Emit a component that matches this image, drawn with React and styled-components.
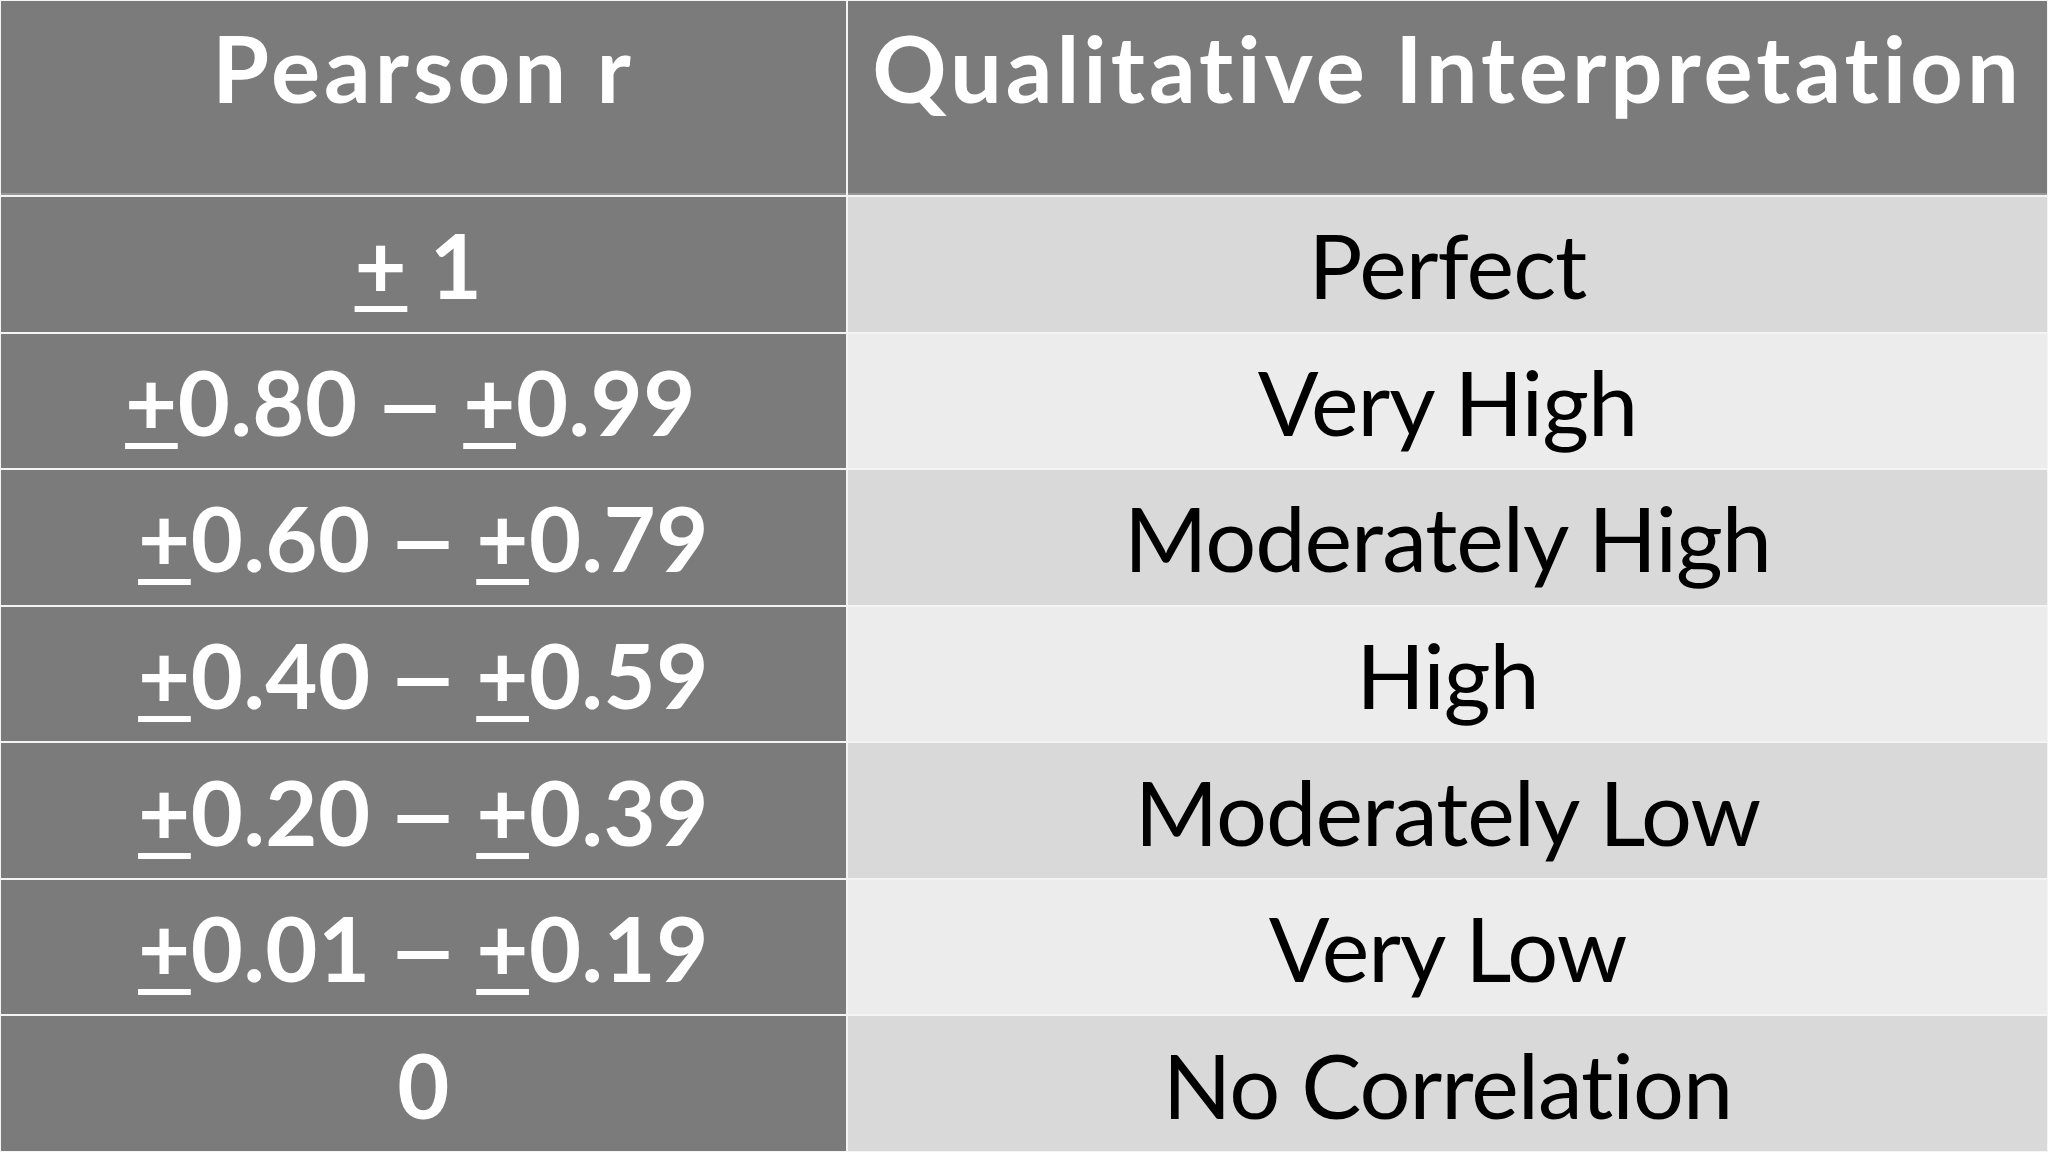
import React from 'react';
import styled, { createGlobalStyle } from 'styled-components';

const GlobalStyle = createGlobalStyle`
  html, body {
    margin: 0;
    padding: 0;
    background: #f4f4f4;
    overflow: hidden;
  }
`;

const Table = styled.div`
  display: grid;
  grid-template-columns: 845px 1fr;
  grid-template-rows: 194px repeat(7, 1fr);
  column-gap: 2px;
  row-gap: 2px;
  box-sizing: border-box;
  width: 2048px;
  height: 1152px;
  padding: 1px;
  background: #f4f4f4;
  font-family: Lato, "Open Sans", sans-serif;
  font-size: 90px;
  line-height: 1.2;
  font-variant-ligatures: none;
`;

const HeadCell = styled.div`
  display: flex;
  justify-content: center;
  align-items: flex-start;
  padding-top: 12px;
  background: #7b7b7b;
  border-bottom: 2px solid #979797;
  color: #ffffff;
  font-size: 92px;
  font-weight: 700;
  letter-spacing: 4px;
  white-space: nowrap;
`;

const RangeCell = styled.div`
  display: flex;
  justify-content: center;
  align-items: center;
  box-sizing: border-box;
  background: #7b7b7b;
  color: #ffffff;
  font-weight: 700;
  letter-spacing: 0.5px;
  white-space: nowrap;
  padding-right: ${(p) => p.$nudge || 0}px;
`;

const LabelCell = styled.div`
  display: flex;
  justify-content: center;
  align-items: center;
  background: ${(p) => (p.$light ? '#ececec' : '#d9d9d9')};
  color: #000000;
  font-weight: 400;
  letter-spacing: -1px;
  white-space: nowrap;
`;

const PlusMinus = styled.span`
  text-decoration: underline;
  text-decoration-thickness: 6px;
  text-underline-offset: 7px;
`;

const Dash = styled.span`
  display: inline-block;
  margin: 0 4px;
  transform: scaleX(1.4);
`;

const rows = [
  { from: null, to: '1', label: 'Perfect', nudge: 10 },
  { from: '0.80', to: '0.99', label: 'Very High', nudge: 26 },
  { from: '0.60', to: '0.79', label: 'Moderately High' },
  { from: '0.40', to: '0.59', label: 'High' },
  { from: '0.20', to: '0.39', label: 'Moderately Low' },
  { from: '0.01', to: '0.19', label: 'Very Low' },
  { zero: true, label: 'No Correlation' },
];

const Range = ({ row }) => {
  if (row.zero) return <span>0</span>;
  if (!row.from) {
    return (
      <span>
        <PlusMinus>+</PlusMinus> {row.to}
      </span>
    );
  }
  return (
    <span>
      <PlusMinus>+</PlusMinus>
      {row.from} <Dash>–</Dash> <PlusMinus>+</PlusMinus>
      {row.to}
    </span>
  );
};

const App = () => (
  <>
    <GlobalStyle />
    <Table>
      <HeadCell>Pearson r</HeadCell>
      <HeadCell>Qualitative Interpretation</HeadCell>
      {rows.map((row, i) => (
        <React.Fragment key={row.label}>
          <RangeCell $nudge={row.nudge}>
            <Range row={row} />
          </RangeCell>
          <LabelCell $light={i % 2 === 1}>{row.label}</LabelCell>
        </React.Fragment>
      ))}
    </Table>
  </>
);

export default App;
